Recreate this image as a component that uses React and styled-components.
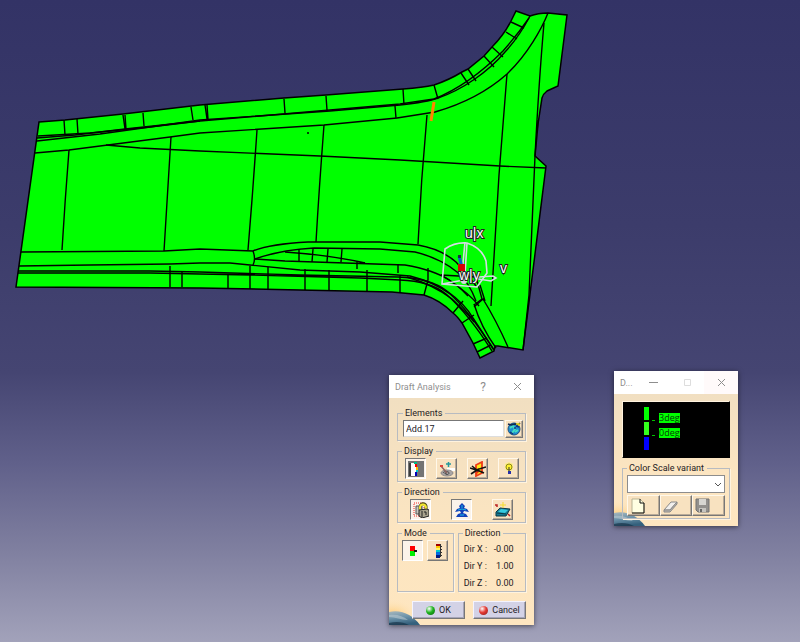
import styled, { createGlobalStyle } from "styled-components";

const GlobalStyle = createGlobalStyle`
  * {
    box-sizing: border-box;
  }
  body {
    margin: 0;
    font-family: Roboto, "Open Sans", sans-serif;
    font-size: 9px;
    line-height: 12px;
    color: #24211f;
  }
  button, input, select {
    font: inherit;
    color: inherit;
  }
`;

const Desktop = styled.main`
  position: relative;
  min-height: 100vh;
  overflow: hidden;
  background: linear-gradient(
    #333366 0%,
    #3c3c6b 35%,
    #454572 58%,
    #60608a 72%,
    #8080a0 86%,
    #a2a2ba 100%
  );
`;

const Model = styled.svg`
  display: block;
`;

const AxisLabel = styled.text`
  font-family: "Liberation Sans", sans-serif;
  font-size: 14px;
  fill: #fff;
  stroke: #222;
  stroke-width: 2px;
  paint-order: stroke;
`;

const Window = styled.section`
  position: absolute;
  left: ${(props) => props.$x}px;
  top: ${(props) => props.$y}px;
  width: ${(props) => props.$width}px;
  background: #fbe4c0;
  box-shadow: 0 1px 5px rgba(0, 0, 0, 0.55);
`;

const TitleBar = styled.header`
  display: flex;
  align-items: center;
  height: 23px;
  padding-left: 6px;
  background: #fff;
  color: #8e8e8e;
`;

const Title = styled.h1`
  flex: 1;
  margin: 0;
  font-size: 9px;
  font-weight: 400;
`;

const TitleButton = styled.button`
  display: flex;
  align-items: center;
  justify-content: center;
  width: 34px;
  height: 23px;
  padding: 0;
  border: 0;
  background: ${(props) => (props.$tint ? "#fffafa" : "transparent")};
  color: #8e8e8e;
  font-size: 12px;
`;

const WindowBody = styled.div`
  position: relative;
  display: flex;
  flex-direction: column;
  gap: ${(props) => props.$gap}px;
  padding: ${(props) => props.$padding};
  background: linear-gradient(#f1dfc1, #fce5c1 60%, #fee6c0);
`;

const Corner = styled.svg`
  position: absolute;
  left: 0;
  bottom: 0;
`;

const Group = styled.fieldset`
  position: relative;
  flex: ${(props) => props.$flex || "none"};
  min-width: 0;
  min-height: ${(props) => props.$minHeight || 0}px;
  margin: 0;
  padding: ${(props) => props.$padding || "1px 4px 2px"};
  border: 1px solid #b7bbc1;
  box-shadow: 1px 1px 0 #fff3df;
`;

const Legend = styled.legend`
  margin-left: 0;
  padding: 0 3px 0 2px;
  white-space: nowrap;
`;

const Row = styled.div`
  position: relative;
  display: flex;
  gap: ${(props) => props.$gap || 0}px;
  padding: ${(props) => props.$padding || 0};
  justify-content: ${(props) => props.$justify || "flex-start"};
`;

const ElementInput = styled.input`
  flex: 1;
  min-width: 0;
  height: 17px;
  padding: 0 2px;
  border: 1px solid;
  border-color: #777 #ddd #ddd #777;
  background: #fff;
`;

const ToolButton = styled.button`
  display: flex;
  flex: ${(props) => (props.$grow ? 1 : "none")};
  align-items: center;
  justify-content: ${(props) => (props.$grow ? "flex-start" : "center")};
  width: ${(props) => props.$size || 21}px;
  height: ${(props) => props.$size || 21}px;
  padding: ${(props) => (props.$grow ? "0 2px" : 0)};
  border: 1px solid;
  border-color: ${(props) =>
    props.$pressed ? "#777 #fff #fff #777" : "#fff8ea #777 #777 #fff8ea"};
  background: ${(props) => (props.$pressed ? "#fbf3ea" : "#f8e2c0")};
  box-shadow: ${(props) =>
    props.$pressed ? "none" : "inset -1px -1px 0 #b9ab98"};
`;

const Values = styled.dl`
  display: grid;
  grid-template-columns: 24px 26px;
  row-gap: 5px;
  margin: 3px 0 0 1px;
  white-space: nowrap;

  dd {
    margin: 0;
    text-align: right;
  }
`;

const ActionButton = styled.button`
  display: flex;
  align-items: center;
  justify-content: center;
  gap: 4px;
  width: 53px;
  height: 18px;
  padding: 0;
  border: 1px solid;
  border-color: #f4f4ff #777 #777 #f4f4ff;
  background: #d3d2e6;
  box-shadow: inset -1px -1px 0 #a5a4b8;
`;

const Led = styled.span`
  width: 9px;
  height: 9px;
  border-radius: 50%;
  background: ${(props) =>
    `radial-gradient(circle at 35% 30%, #fff, ${props.$color} 45%, ${props.$dark})`};
`;

const ScaleView = styled.div`
  display: flex;
  gap: 2px;
  height: 57px;
  padding: 5px 0 0 21px;
  border: 1px solid;
  border-color: #fff3df #000 #000 #fff3df;
  background: #000;
`;

const Swatches = styled.div`
  display: flex;
  flex-direction: column;
  gap: 2px;
  width: 5px;
`;

const Swatch = styled.span`
  height: 13px;
  background: ${(props) => props.$color};
`;

const Marks = styled.ul`
  display: flex;
  flex-direction: column;
  gap: 5px;
  margin: 0;
  padding: 6px 0 0;
  list-style: none;
`;

const Mark = styled.li`
  display: flex;
  align-items: center;
  gap: 4px;
  height: 10px;
  color: #063b06;
  font-family: "Open Sans", sans-serif;
  line-height: 10px;

  &::before {
    content: "";
    width: 3px;
    height: 1px;
    margin: 5px 0 0 1px;
    background: #00c000;
  }

  span {
    background: #00ff00;
  }
`;

const VariantSelect = styled.select`
  display: block;
  width: 100%;
  height: 18px;
  border: 1px solid #8d8d8d;
  border-radius: 0;
  background: #fff;
  appearance: none;
`;

const SelectWrap = styled.div`
  position: relative;

  svg {
    position: absolute;
    right: 3px;
    top: 7px;
    pointer-events: none;
  }
`;

const toolIcons = {
  catalog: (
    <>
      <circle cx="8" cy="8" r="6" fill="#1e8fd0" stroke="#1c4f80" />
      <path d="M4 7l3-2 2 3-3 4M9 11l3-2" fill="none" stroke="#46dfc0" strokeWidth="2" />
      <path d="M2 3l3 1 4-1 3 1 2-2" fill="none" stroke="#142a50" strokeWidth="1.5" />
      <path d="M10 5l3 1M4 11l3 2M8 7h2" fill="none" stroke="#12357c" strokeWidth="1.5" />
      <path d="M10 3h3v2" fill="none" stroke="#efdd18" strokeWidth="1.5" />
    </>
  ),
  scale: (
    <>
      <path d="M0 0h16v16H0z" fill="#747474" />
      <path d="M1 2h2v13H1z" fill="#3c3c3c" />
      <path d="M3 2h5v13H3z" fill="#fff" />
      <path d="M6 1h3v2H6z" fill="#0b8" />
      <path d="M7 3h2v3H7z" fill="#f00" />
      <path d="M8 6h2v3H8z" fill="#fb0" />
      <path d="M8 9h2v2H8z" fill="#0cc" />
      <path d="M7 11h2v4H7z" fill="#00b" />
    </>
  ),
  fly: (
    <>
      <path d="M8 7h8v3H8z" fill="#fff" />
      <ellipse cx="8" cy="12" rx="6" ry="3" fill="#aaa6a6" stroke="#8c8888" />
      <path d="M4 12c1-2 6-2 6 0s-4 2-4 0h2" fill="none" stroke="#444" />
      <path d="M2 5l6 7" stroke="#8f6561" strokeWidth="1.5" />
      <path d="M1 4h3v2H1z" fill="#e0433a" />
      <path d="M7 3h5M9.5 1v5" stroke="#23999b" strokeWidth="1.5" />
    </>
  ),
  light: (
    <>
      <path d="M6 4l6-3v11l-6 3z" fill="#fcec19" stroke="#ee3b17" strokeWidth="1.8" />
      <path d="M6 9l3-2v4l-3 3z" fill="#f03814" />
      <path d="M0 7l6 2 10-3M1 13l6-4 7 3M2 5l6 5" fill="none" stroke="#111" strokeWidth="1.6" />
    </>
  ),
  bulb: (
    <>
      <path d="M4 3L8 1l4 2v5l-3 3H7L4 8z" fill="#fff36b" opacity="0.7" />
      <circle cx="8" cy="6" r="3" fill="#fff22d" stroke="#8b8718" />
      <path d="M8 6v4" stroke="#333" />
      <path d="M7 10h3v3H7z" fill="#2630a8" />
    </>
  ),
  lock: (
    <>
      <path d="M1 1h10v13H1z" fill="none" stroke="#f12b22" strokeDasharray="1 1" />
      <path d="M3 4h6v8H3z" fill="#c9c7c0" stroke="#555" />
      <path d="M7 8V5c1-5 7-4 6 1v3" fill="none" stroke="#555018" strokeWidth="3" />
      <path d="M7 8V5c1-4 6-3 6 1v3" fill="none" stroke="#f4e72f" strokeWidth="2" />
      <path d="M6 8l8-1 2 1v6l-7 2-3-2z" fill="#a9a28d" stroke="#222" />
      <path d="M9 9v6" stroke="#222" />
      <path d="M11 10h2v3" fill="none" stroke="#222" />
    </>
  ),
  compass: (
    <>
      <path d="M8 1l3 3-1 2 3 1 2 3-5-1-1 2 3 1 2 3H2l2-3 3-1-1-2-5 1 2-3 3-1-1-2z" fill="#1241b8" />
      <path d="M8 3v3M4 8l4-1 4 1M6 13h4" fill="none" stroke="#19b8e8" />
    </>
  ),
  plane: (
    <>
      <path d="M1 14v-4l4-4 10 1-4 7z" fill="#187a94" stroke="#0b3944" />
      <path d="M3 10l3-3 7 1-3 3z" fill="#36cbe0" />
      <path d="M2 11l9 1" stroke="#0b3944" />
      <path d="M8 0v6M5 3h6" stroke="#f4dd28" />
      <path d="M0 3h2v2M13 12l2 2" fill="none" stroke="#b22" strokeWidth="1.5" />
    </>
  ),
  quick: (
    <>
      <path d="M5 3h5v5H5z" fill="#f00" />
      <path d="M5 8h5v5H5z" fill="#0e0" />
      <path d="M9 8h3" stroke="#111" strokeWidth="2" />
    </>
  ),
  full: (
    <>
      <path d="M6 1h4v2H6z" fill="#a00000" />
      <path d="M6 3h4v2H6z" fill="#fc0" />
      <path d="M6 5h4v2H6z" fill="#fff36b" />
      <path d="M6 7h4v2H6z" fill="#0cc" />
      <path d="M6 9h4v3H6z" fill="#0068df" />
      <path d="M6 12h4v3H6z" fill="#001a80" />
      <path d="M10.500 1v13" stroke="#333" />
      <path d="M11 3.500h1M11 6.500h1M11 9.500h1M11 12.500h1" stroke="#333" />
    </>
  ),
  page: (
    <>
      <path d="M2 1h8l4 4v10H2z" fill="#ffffe2" stroke="#b8b393" />
      <path d="M10 1v4h4v10H2" fill="none" stroke="#111" />
    </>
  ),
  eraser: (
    <>
      <path d="M1 12l7-8h6l-7 8z" fill="#f1efec" stroke="#888" />
      <path d="M1 12v2h6l7-8V4l-7 8z" fill="#bbb8b2" stroke="#888" />
    </>
  ),
  disk: (
    <>
      <path d="M1 1h13v13H3l-2-2z" fill="#92908d" stroke="#727272" />
      <path d="M4 1h7v6H4z" fill="#d7d6d2" />
      <path d="M4 10h7v4H4z" fill="#c6c4bf" />
      <path d="M5 11h2v3H5z" fill="#666" />
    </>
  ),
};

const tools = [
  { icon: "scale", label: "Show color scale", pressed: true },
  { icon: "fly", label: "On the fly analysis" },
  { icon: "light", label: "No highlight" },
  { icon: "bulb", label: "Light effect" },
];

const directionTools = [
  { icon: "lock", label: "Lock direction", pressed: true },
  { icon: "compass", label: "Use compass", pressed: true },
  { icon: "plane", label: "Inverse direction" },
];

const modeTools = [
  { icon: "quick", label: "Quick mode", pressed: true },
  { icon: "full", label: "Full mode" },
];

const variantTools = [
  { icon: "page", label: "New variant" },
  { icon: "eraser", label: "Remove variant" },
  { icon: "disk", label: "Save variant" },
];

function Tool({ icon, label, pressed, size, grow }) {
  return (
    <ToolButton
      type="button"
      aria-label={label}
      $pressed={pressed}
      $size={size}
      $grow={grow}
    >
      <svg width="16" height="16" viewBox="0 0 16 16">
        {toolIcons[icon]}
      </svg>
    </ToolButton>
  );
}

function CloseIcon() {
  return (
    <svg width="9" height="9" viewBox="0 0 9 9">
      <path d="M1 1l7 7M8 1L1 8" stroke="#8e8e8e" fill="none" />
    </svg>
  );
}

function CornerArt() {
  return (
    <Corner width="36" height="26" viewBox="0 0 36 26">
      <defs>
        <linearGradient id="sea" x1="0" y1="0" x2="0.3" y2="1">
          <stop offset="0" stopColor="#a9b8bd" />
          <stop offset="0.5" stopColor="#6c93aa" />
          <stop offset="1" stopColor="#34607c" />
        </linearGradient>
        <radialGradient id="glow" cx="0.1" cy="0.7" r="0.7">
          <stop offset="0" stopColor="#ffc25a" />
          <stop offset="1" stopColor="#fee6c0" stopOpacity="0" />
        </radialGradient>
      </defs>
      <path d="M0 0h36v26H0z" fill="url(#glow)" />
      <path d="M0 13c12-3 24 3 31 13H0z" fill="url(#sea)" />
      <path d="M0 16c8-1 14 1 19 5-7 0-13-3-19-3z" fill="#b9c8ce" opacity="0.6" />
      <path d="M0 24c8-2 14-1 20 2H0z" fill="#122c40" opacity="0.6" />
    </Corner>
  );
}

function PartModel() {
  return (
    <Model width="800" height="642" viewBox="0 0 800 642">
      <path
        d="M39 122L65 120 123 114 200 105 284 98 326 95 403 89C416 88 425 87 434 85Q449 80 462 72L468 69 484 56 492 47C500 39 507 29 511 21L516 11 530 16Q538 13 548 13L567 15 558 86 547 91Q543 94 542 98L538 124 535 156 546 166 523 350 498 346 495 346 494 351 480 358 473 343 462 323Q457 316 453 313 440 300 424 295L392 292 300 290 200 288 16 287Z"
        fill="#00ff00"
        stroke="#000"
        strokeWidth="1.5"
      />
      <g fill="none" stroke="#000" strokeWidth="1.4">
        {/* upper flange */}
        <path d="M38 136L90 133 150 127 200 120 330 111 400 105Q427 102 438 98C462 90 488 72 505 52Q519 37 530 16" />
        <path d="M37 138L75 135 125 129 200 121 330 110 400 104 434 99C462 88 483 71 503 51Q518 34 529 18" />
        <path d="M37 141L100 134 150 127 200 121" />
        <path d="M35 153L69 150 170 137 200 133 324 125 397 118 435 112C463 104 489 90 507 74 528 54 542 28 548 13" />
        <path d="M64 120l1 15M77 119l1 15M123 115l2 14M125 115l1 14M143 113l1 13M191 107l2 13M205 105l2 14M207 105l1 14M284 99l1 14M326 96l1 14M403 89l1 16M395 106l1 12M434 85l4 14M461 73l8 12M468 69l8 12M484 56l10 11M492 47l11 10M506 32l11 7M511 22l13 6" />
        {/* panel face */}
        <path d="M69 150Q65 200 62 250M171 137L164 251M257 130Q253 190 248 250M324 125Q319 190 316 242M427 115Q421 180 418 244M507 74L499 175 491 306M544 23Q539 80 535 156L529 295 523 350" />
        <path d="M106 145L140 148 200 151 320 156 400 160 500 166 546 168M538 120l-1 12" />
        {/* lower ribs */}
        <path d="M21 252L164 251 200 249 253 251M19 266L90 265 170 264 200 263 230 263 250 265 300 270 360 272 410 276Q434 282 450 294C463 305 479 327 494 350" />
        <path d="M18 271L150 271 200 272 300 275 398 277Q430 278 447 291 465 304 473 318L494 350M18 273L150 273 250 275 360 278 400 280Q430 281 446 294C463 309 478 329 492 351" />
        <path d="M253 251Q270 244 308 242L380 242 418 245Q441 249 456 262 467 273 476 286M255 259Q280 250 314 248L380 249 415 252Q440 258 457 272 469 282 476 301" />
        <path d="M255 259l30 2 60 2 60 2Q434 270 449 280 470 294 479 306M285 252Q330 255 365 263M407 277Q434 285 452 299 469 315 474 322M441 275l35 2 6 22-8 6" />
        <path d="M253 251q3 8 0 14M299 250v11M313 249l-1 13M328 249l-1 13M342 249l-1 13M357 262v7M398 265v8M428 268v12" />
        <path d="M170 266v21M182 272v15M228 275v14M250 266v23M268 267v23M305 269v21M329 270v20M367 270v21M400 276v16M428 280l-4 15M463 301l-10 12M474 315l-12 8M487 338l-14 6M491 345l-14 7" />
        <path d="M474 307l9-8q13 21 25 48M480 285l5 16M474 304q7 23 22 44M441 275q15 8 27 21" />
      </g>
      <circle cx="308" cy="133" r="1" />
      <path d="M434 102L431 121" stroke="#ff8500" strokeWidth="3" />
      {/* compass */}
      <g fill="none" stroke="#d5dce4" strokeWidth="1.6">
        <path d="M442 284L445 249Q455 242 467 243 482 248 486 261L487 273 477 287zM442 284L464 280" />
        <path d="M465 242L462 274M467 243L465 274" />
        <path d="M479 277L493 276 496 278 491 281 478 279z" />
      </g>
      <path d="M459 256l3 11" stroke="#075fc7" strokeWidth="3" />
      <path d="M458 255h3v3h-3z" fill="#222c45" />
      <circle cx="464" cy="281" r="3" fill="#d8d4df" />
      <AxisLabel x="465" y="238">u|x</AxisLabel>
      <AxisLabel x="459" y="280">w|y</AxisLabel>
      <AxisLabel x="500" y="273">v</AxisLabel>
      <path d="M458 264h7v7h-7z" fill="#d90000" />
    </Model>
  );
}

function DraftAnalysis() {
  return (
    <Window $x={389} $y={375} $width={145}>
      <TitleBar>
        <Title>Draft Analysis</Title>
        <TitleButton type="button" aria-label="Help">
          ?
        </TitleButton>
        <TitleButton type="button" aria-label="Close">
          <CloseIcon />
        </TitleButton>
      </TitleBar>
      <WindowBody $gap={4} $padding="9px 8px 6px">
        <CornerArt />
        <Group $padding="1px 2px 2px 5px">
          <Legend>
            <label htmlFor="elements">Elements</label>
          </Legend>
          <Row $gap={1}>
            <ElementInput id="elements" defaultValue="Add.17" />
            <Tool icon="catalog" label="Edit elements" size={18} />
          </Row>
        </Group>
        <Group>
          <Legend>Display</Legend>
          <Row $justify="space-between" $padding="0 2px 0 3px">
            {tools.map((tool) => (
              <Tool key={tool.icon} {...tool} />
            ))}
          </Row>
        </Group>
        <Group>
          <Legend>Direction</Legend>
          <Row $justify="space-between" $padding="0 8px">
            {directionTools.map((tool) => (
              <Tool key={tool.icon} {...tool} />
            ))}
          </Row>
        </Group>
        <Row $gap={4}>
          <Group $flex={4} $minHeight={65}>
            <Legend>Mode</Legend>
            <Row $gap={4}>
              {modeTools.map((tool) => (
                <Tool key={tool.icon} {...tool} />
              ))}
            </Row>
          </Group>
          <Group $flex={5}>
            <Legend>Direction</Legend>
            <Values>
              <dt>Dir X :</dt>
              <dd>-0.00</dd>
              <dt>Dir Y :</dt>
              <dd>1.00</dd>
              <dt>Dir Z :</dt>
              <dd>0.00</dd>
            </Values>
          </Group>
        </Row>
        <Row $gap={8} $justify="flex-end" $padding="5px 0 0">
          <ActionButton type="button">
            <Led $color="#20b520" $dark="#075d07" />
            OK
          </ActionButton>
          <ActionButton type="button">
            <Led $color="#e43b34" $dark="#881515" />
            Cancel
          </ActionButton>
        </Row>
      </WindowBody>
    </Window>
  );
}

function ColorScale() {
  return (
    <Window $x={614} $y={371} $width={124}>
      <TitleBar>
        <Title>D...</Title>
        <TitleButton type="button" aria-label="Minimize">
          <svg width="9" height="9">
            <path d="M0 4.500h9" stroke="#8e8e8e" />
          </svg>
        </TitleButton>
        <TitleButton type="button" aria-label="Maximize" disabled>
          <svg width="9" height="9">
            <path d="M1.500 1.500h6v6h-6z" stroke="#ddd" fill="none" />
          </svg>
        </TitleButton>
        <TitleButton type="button" aria-label="Close" $tint>
          <CloseIcon />
        </TitleButton>
      </TitleBar>
      <WindowBody $gap={4} $padding="7px 8px 7px">
        <CornerArt />
        <ScaleView>
          <Swatches>
            <Swatch $color="#00ff00" />
            <Swatch $color="#33ff1c" />
            <Swatch $color="#0000ff" />
          </Swatches>
          <Marks>
            <Mark>
              <span>3deg</span>
            </Mark>
            <Mark>
              <span>0deg</span>
            </Mark>
          </Marks>
        </ScaleView>
        <Group>
          <Legend>
            <label htmlFor="variant">Color Scale variant</label>
          </Legend>
          <SelectWrap>
            <VariantSelect id="variant" />
            <svg width="7" height="5">
              <path d="M0 1l3 3 3-3" fill="none" stroke="#555" />
            </svg>
          </SelectWrap>
          <Row $padding="2px 0 0">
            {variantTools.map((tool) => (
              <Tool key={tool.icon} {...tool} grow />
            ))}
          </Row>
        </Group>
      </WindowBody>
    </Window>
  );
}

function App() {
  return (
    <>
      <GlobalStyle />
      <Desktop>
        <PartModel />
        <DraftAnalysis />
        <ColorScale />
      </Desktop>
    </>
  );
}

export default App;
